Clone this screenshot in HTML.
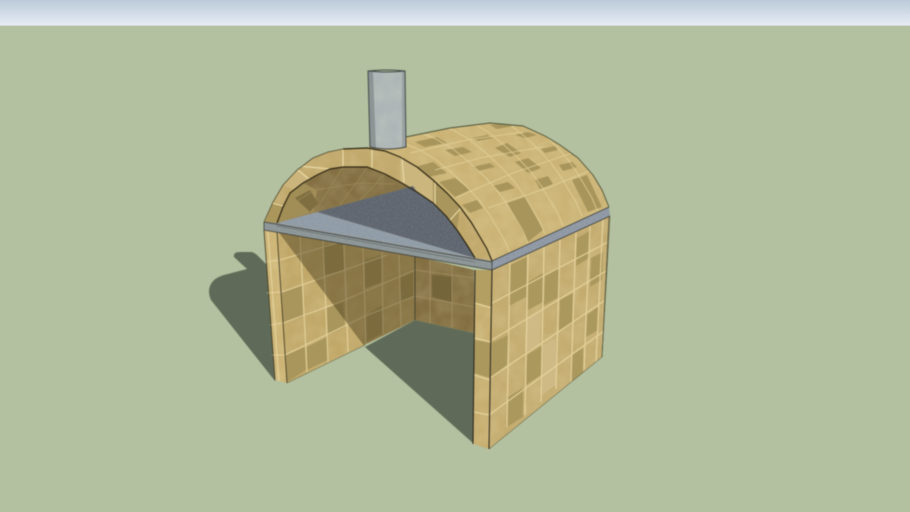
<!DOCTYPE html>
<html><head><meta charset="utf-8"><title>Oven</title>
<style>html,body{margin:0;padding:0;background:#b3c1a0}svg{display:block}</style></head>
<body>
<svg width="910" height="512" viewBox="0 0 910 512" xmlns="http://www.w3.org/2000/svg">
<defs>
<linearGradient id="sky" x1="0" y1="0" x2="0" y2="1"><stop offset="0" stop-color="#bbcad9"/><stop offset="1" stop-color="#e6ebf4"/></linearGradient>
<filter id="soft" x="190" y="50" width="440" height="410" filterUnits="userSpaceOnUse" color-interpolation-filters="sRGB"><feGaussianBlur stdDeviation="0.45"/></filter>
<filter id="tex" x="0" y="0" width="100%" height="100%" color-interpolation-filters="sRGB">
<feTurbulence type="fractalNoise" baseFrequency="0.07" numOctaves="2" seed="4" result="n"/>
<feColorMatrix in="n" type="matrix" values="0 0 0 0 1  0 0 0 0 1  0 0 0 0 .85  1.6 0 0 0 -0.45" result="a"/>
<feComposite in="a" in2="SourceAlpha" operator="in" result="b"/>
<feComponentTransfer in="b" result="c"><feFuncA type="linear" slope="0.14"/></feComponentTransfer>
<feMerge><feMergeNode in="SourceGraphic"/><feMergeNode in="c"/></feMerge>
</filter>
<filter id="fine" x="0" y="0" width="100%" height="100%" color-interpolation-filters="sRGB">
<feTurbulence type="fractalNoise" baseFrequency="0.5" numOctaves="2" seed="8" result="n"/>
<feColorMatrix in="n" type="matrix" values="0 0 0 0 1  0 0 0 0 1  0 0 0 0 1  1.6 0 0 0 -0.5" result="a"/>
<feComposite in="a" in2="SourceAlpha" operator="in" result="b"/>
<feComponentTransfer in="b" result="c"><feFuncA type="linear" slope="0.1"/></feComponentTransfer>
<feMerge><feMergeNode in="SourceGraphic"/><feMergeNode in="c"/></feMerge>
</filter>
<clipPath id="roofClip"><polygon points="264,222 273,202 283,185 297,170 313,158 328,152 343,149 367,148 406,137 450,128 490,123 523,126 545,136 560,145 578,158 593,175 602,190 609,207 492,261"/></clipPath>
<clipPath id="rwClip"><polygon points="492,270 610,216 602,357 489,449"/></clipPath>
<clipPath id="iwClip"><polygon points="277,230 415,256 415,320 287,383"/></clipPath>
<clipPath id="bwClip"><polygon points="415,256 474,270 474,333 415,320"/></clipPath>
<clipPath id="vaultClip"><polygon points="277,223 283,207 290,193 303,183 317,175 330,169 343,167 367,167 385,174 400,182 413,189 317,212"/></clipPath>
<polyline id="arc" fill="none" points="330,152 343,149 367,148 385,151 400,157 417,167 433,180 447,193 460,207 471,222 480,237 487,249 492,261"/>
</defs>

<rect width="910" height="512" fill="#b3c1a0"/>
<rect width="910" height="25" fill="url(#sky)"/>
<rect y="25" width="910" height="1" fill="#d3d9d2"/>

<g filter="url(#soft)">
<!-- shadow -->
<path d="M275,381 L211,300 Q207,291 211,284 Q214,278 224,275 L247,269 L234,257 Q233,252 240,252 L250,252 Q254,252 257,255 L270,268 L300,330 Z" fill="#5f6b58"/>
<polygon points="365,347 415,320 474,333 474,444" fill="#5f6b58"/>

<!-- back wall -->
<polygon points="415,256 474,270 474,333 415,320" fill="#836f41" filter="url(#tex)"/>
<g clip-path="url(#bwClip)">
<polygon points="432,275 452,277 452,302 432,297" fill="#75653a"/>
<g stroke="#a08e62" stroke-width="1" fill="none" opacity=".85">
<path d="M430,258V323M452,263V328"/>
<path d="M415,270L474,278M415,296L474,307"/>
</g></g>

<!-- left inner wall -->
<polygon points="277,230 415,256 415,320 287,383" fill="#c1a869" filter="url(#tex)"/>
<g clip-path="url(#iwClip)">
<g fill="#a9965c">
<polygon points="282,292 302,285 303,317 283,323"/>
<polygon points="327,308 343,302 345,327 328,335"/>
<polygon points="307,347 327,337 328,360 307,370"/>
<polygon points="286,355 305,347 306,370 287,382"/>
<polygon points="323,245 343,243 344,270 325,275"/>
<polygon points="365,260 382,255 382,282 365,288"/>
<polygon points="400,278 413,272 413,296 401,303"/>
<polygon points="366,315 383,305 383,333 366,342"/>
</g>
<g stroke="#e9d9a4" stroke-width="1.1" fill="none" opacity=".85">
<path d="M300,235L307,372M323,240L328,362M344,245L348,352M363,248L366,344M382,252L383,334M399,255L401,326"/>
<path d="M280,260L340,242M282,292L387,255M283,323L340,302L415,270M285,355L363,317L415,296"/>
</g>
<polygon points="277,230 365,347 415,320 415,256" fill="#3b2f14" opacity=".42"/>
</g>
<path d="M415,256V320" stroke="#4a4530" stroke-width="1" fill="none"/>

<!-- left pillar -->
<polygon points="264,230 277,232 287,383 275,380" fill="#ccb374" filter="url(#tex)"/>
<g stroke="#e9d9a4" stroke-width="1.1" fill="none" opacity=".85">
<path d="M268,232L279,381"/>
<path d="M266,262L279,260M267,293L282,292M270,325L283,323M272,355L285,355"/>
</g>
<path d="M277,232L287,383M275,380L264,230" stroke="#3a3520" stroke-width=".8" fill="none"/>
<path d="M287,383L365,345" stroke="#6d6a4a" stroke-width=".6" fill="none"/>

<!-- right pillar -->
<polygon points="475,270 492,270 489,449 473,444" fill="#c7ae70" filter="url(#tex)"/>
<polygon points="475,340 491,343 490,378 474,373" fill="#ab985c"/>
<polygon points="475,270 492,270 492,307 475,303" fill="#b39f62"/>
<g stroke="#e9d9a4" stroke-width="1.2" fill="none" opacity=".85">
<path d="M475,303L492,308M475,338L491,342M474,375L490,380M474,412L489,415"/>
</g>

<!-- right wall -->
<polygon points="492,270 610,216 602,357 489,449" fill="#c4ac70" filter="url(#tex)"/>
<g clip-path="url(#rwClip)">
<g fill="#ab985d">
<polygon points="510,265 527,257 526,297 509,306"/>
<polygon points="528,282 543,273 543,302 528,310"/>
<polygon points="545,275 559,267 559,297 544,305"/>
<polygon points="560,300 573,293 572,323 559,331"/>
<polygon points="587,315 598,307 598,330 586,337"/>
<polygon points="527,355 542,346 541,375 526,385"/>
<polygon points="492,343 508,335 507,365 491,377"/>
<polygon points="508,397 523,388 523,417 507,427"/>
<polygon points="572,355 583,348 583,373 571,382"/>
<polygon points="577,238 590,231 589,258 576,266"/>
<polygon points="591,258 603,252 602,280 590,287"/>
</g>
<polygon points="526,318 541,310 540,345 525,352" fill="#cfba86"/>
<polygon points="543,345 556,338 556,385 542,395" fill="#cfba86"/>
<g stroke="#e9d9a4" stroke-width="1.2" fill="none" opacity=".85">
<path d="M510,262L507,427M528,254L525,415M544,247L541,402M560,240L556,389M576,232L571,382M590,226L584,370M603,219L596,362"/>
<path d="M492,303L610,241M492,340L606,271M490,378L604,301M489,415L604,331"/>
</g></g>
<polygon points="492,270 610,216 602,357 489,449" fill="none" stroke="#4a4530" stroke-width=".5"/>

<!-- roof -->
<g clip-path="url(#roofClip)">
<rect x="260" y="115" width="355" height="150" fill="#cbb375" filter="url(#tex)"/>
<g fill="#a8955b">
<polygon points="415,142 437,137 447,143 425,147"/>
<polygon points="472,138 487,135 493,138 478,141"/>
<polygon points="515,135 528,132 537,135 525,138"/>
<polygon points="445,150 463,147 472,152 455,156"/>
<polygon points="495,148 507,143 521,153 510,157"/>
<polygon points="541,149 555,146 558,150 545,153"/>
<polygon points="415,167 433,162 447,173 428,177"/>
<polygon points="473,167 490,163 495,167 478,171"/>
<polygon points="515,162 528,158 541,168 528,173"/>
<polygon points="559,165 572,162 577,167 563,171"/>
<polygon points="439,182 455,178 470,190 455,197"/>
<polygon points="493,186 508,182 515,188 500,192"/>
<polygon points="535,180 548,176 553,184 540,189"/>
<polygon points="462,205 477,200 483,208 470,213"/>
<polygon points="507,203 525,197 543,230 528,242"/>
<polygon points="572,180 587,175 602,207 588,212"/>
<polygon points="490,125 507,123 513,126 497,129"/>
</g>
<g stroke="#e6d6a0" stroke-width="1" fill="none" opacity=".7">
<path d="M488,208L547,188L602,166M455,198L513,173L575,152M435,170L480,158L542,147M410,153L467,140L523,132"/>
<use href="#arc" transform="translate(18,-8)"/>
<use href="#arc" transform="translate(36,-18)"/>
<use href="#arc" transform="translate(53,-27)"/>
<use href="#arc" transform="translate(71,-35)"/>
<use href="#arc" transform="translate(90,-45)"/>
<use href="#arc" transform="translate(105,-51)"/>
</g>
<!-- front band -->
<polygon points="264,222 273,202 283,185 297,170 313,158 328,152 343,149 367,148 385,151 400,157 417,167 433,180 447,193 460,207 471,222 480,237 487,249 492,261 475,258 467,245 457,230 446,216 433,203 417,192 400,182 385,174 367,167 343,167 330,169 317,175 303,183 290,193 283,207 277,223" fill="#c1a86b" filter="url(#tex)"/>
<polygon points="283,185 297,170 312,180 297,191 " fill="#cbb57c"/>
<polygon points="400,157 417,167 433,180 433,203 417,192 400,182" fill="#cbb67e"/>
<polygon points="433,180 447,193 460,207 457,230 446,216 433,203" fill="#a9965c"/>
<polygon points="265,222 273,202 290,206 280,224" fill="#ab975c"/>
<g stroke="#e9daa6" stroke-width="1.2" fill="none">
<path d="M343,149L343,167M372,149L372,168M402,157L404,183M435,181L435,205M298,170L310,180"/>
<path d="M272,203L284,206M299,166L330,169M461,208L450,220"/>
</g>
</g>

<!-- vault -->
<polygon points="277,223 283,207 290,193 303,183 317,175 330,169 343,167 367,167 385,174 400,182 413,189 317,212" fill="#836f42" filter="url(#tex)"/>
<g clip-path="url(#vaultClip)">
<polygon points="277,223 290,193 303,183 317,190 314,212" fill="#a18e57"/>
<polygon points="295,198 310,190 318,203 310,212" fill="#7f6e40"/>
<g stroke="#9c8a58" stroke-width="1" fill="none" opacity=".8">
<path d="M343,167L315,212M367,168L340,205M385,174L360,200M290,205L315,190L360,183L395,184"/>
</g></g>

<!-- floor -->
<polygon points="277,223 317,212 475,258" fill="#8e9aa5" filter="url(#fine)"/>
<polygon points="317,212 413,186 417,192 433,203 446,216 457,230 467,245 475,258" fill="#5d646e" filter="url(#fine)"/>

<!-- slab -->
<polygon points="264,222 277,223 475,258 492,261 492,270 264,230" fill="#8b9495" filter="url(#fine)"/>
<polygon points="492,261 609,207 610,216 492,270" fill="#8d97a3" filter="url(#fine)"/>
<path d="M264,222L492,262M264,230L492,270M492,270L610,216M492,261L609,207M264,222V230M492,261V270" stroke="#3c3f3c" stroke-width=".8" fill="none"/>
<path d="M277,226L475,262" stroke="#5a605f" stroke-width=".6" fill="none"/>

<!-- arch lines -->
<polyline points="264,222 273,202 283,185 297,170 313,158 328,152 343,149 367,148" fill="none" stroke="#4e4a30" stroke-width=".8"/>
<polyline points="343,149 367,148 385,151 400,157 417,167 433,180 447,193 460,207 471,222 480,237 487,249 492,261" fill="none" stroke="#2e2712" stroke-width="1.2"/>
<polyline points="277,223 283,207 290,193 303,183 317,175 330,169 343,167 367,167 385,174 400,182 417,192 433,203 446,216 457,230 467,245 475,258" fill="none" stroke="#2e2712" stroke-width="1.2"/>
<polyline points="406,137 450,128 490,123 523,126 545,136 560,145 578,158 593,175 602,190 609,207" fill="none" stroke="#4e5236" stroke-width=".9"/>

<!-- pillar edges -->
<path d="M475,270L473,444M489,449L492,270" stroke="#26221a" stroke-width="1" fill="none"/>
<path d="M609,216L602,357" stroke="#4e5236" stroke-width=".7" fill="none"/>

<!-- chimney -->
<path d="M368,71 Q387,73 405,71 L406,147 Q388,151 370,147 Z" fill="#adb5b6" filter="url(#tex)"/>
<path d="M368,71 L370,147 L376,149 L373,72 Z" fill="#80888a" opacity=".75"/>
<path d="M405,71 L406,147 L402,148 L402,72 Z" fill="#8a9295" opacity=".6"/>
<path d="M368,71 Q387,73 405,71 L406,147 Q388,151 370,147 Z" fill="none" stroke="#444a48" stroke-width="1"/>
<path d="M368,71 Q387,69 405,71" fill="none" stroke="#444a48" stroke-width="1"/>
</g>
</svg>
</body></html>
